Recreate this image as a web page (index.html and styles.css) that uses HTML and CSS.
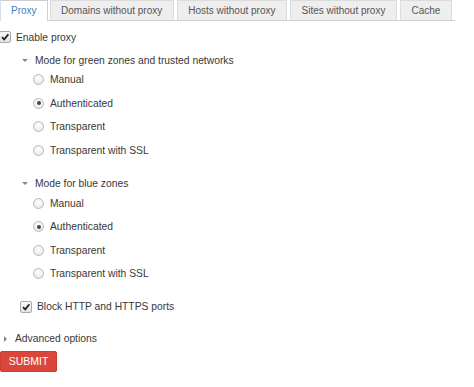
FILE: index.html
```html
<!DOCTYPE html>
<html>
<head>
<meta charset="utf-8">
<link rel="stylesheet" href="styles.css">
</head>
<body>
<div class="tabs">
  <div class="tab active">Proxy</div>
  <div class="tab">Domains without proxy</div>
  <div class="tab">Hosts without proxy</div>
  <div class="tab">Sites without proxy</div>
  <div class="tab">Cache</div>
</div>
<div class="form">
  <div class="row top-row"><span class="check"><svg viewBox="0 0 10 10" width="10" height="10"><path d="M2 5.2 L4.2 7.4 L8.4 2.2" fill="none" stroke="#222" stroke-width="1.8"/></svg></span><span class="label l-enable">Enable proxy</span></div>

  <div class="group">
    <div class="row head"><span class="tri-down"></span><span class="label">Mode for green zones and trusted networks</span></div>
    <div class="row radio-row first"><span class="radio"></span><span class="label">Manual</span></div>
    <div class="row radio-row"><span class="radio on"></span><span class="label">Authenticated</span></div>
    <div class="row radio-row"><span class="radio"></span><span class="label">Transparent</span></div>
    <div class="row radio-row"><span class="radio"></span><span class="label">Transparent with SSL</span></div>
  </div>

  <div class="group">
    <div class="row head"><span class="tri-down"></span><span class="label">Mode for blue zones</span></div>
    <div class="row radio-row first"><span class="radio"></span><span class="label">Manual</span></div>
    <div class="row radio-row"><span class="radio on"></span><span class="label">Authenticated</span></div>
    <div class="row radio-row"><span class="radio"></span><span class="label">Transparent</span></div>
    <div class="row radio-row"><span class="radio"></span><span class="label">Transparent with SSL</span></div>
  </div>

  <div class="row block-row"><span class="check"><svg viewBox="0 0 10 10" width="10" height="10"><path d="M2 5.2 L4.2 7.4 L8.4 2.2" fill="none" stroke="#222" stroke-width="1.8"/></svg></span><span class="label l-block">Block HTTP and HTTPS ports</span></div>

  <div class="row adv-row"><span class="tri-right"></span><span class="label l-adv">Advanced options</span></div>

  <button class="submit">SUBMIT</button>
</div>
</body>
</html>
```
FILE: styles.css
```css
html, body {
  margin: 0;
  padding: 0;
  background: #fff;
}
body {
  font-family: Arial, "Liberation Sans", sans-serif;
  font-size: 10.3px;
  color: #383838;
}
.tabs {
  display: flex;
  width: 455px;
  height: 20px;
  border-bottom: 1px solid #cfcfcf;
  box-sizing: content-box;
}
.tab {
  flex: none;
  white-space: nowrap;
  height: 20px;
  line-height: 19px;
  font-size: 10px;
  padding: 0 10.5px;
  margin-right: 3px;
  background: #eeeeee;
  color: #555;
  border: 1px solid #dcdcdc;
  border-bottom: none;
  box-sizing: border-box;
}
.tab.active {
  background: #fff;
  color: #3d7fbf;
  height: 21px;
  border-color: #cfcfcf;
  border-left-color: #cfe0ef;
  padding: 0 10px;
  margin-right: 2px;
}
.form {
  padding: 0;
}
.row {
  display: flex;
  align-items: center;
  height: 16px;
}
.top-row {
  margin-top: 8px;
}
.check {
  width: 10px;
  height: 10px;
  border: 1px solid #aaa;
  border-radius: 2px;
  background: linear-gradient(#fafafa, #e2e2e2);
  display: flex;
  align-items: center;
  justify-content: center;
  box-sizing: content-box;
  flex: none;
}
.check svg { display: block; }
.label { white-space: nowrap; }
.l-enable { margin-left: 5px; }
.top-row .check { margin-left: -1px; }
.group { margin-top: 7px; }
.group + .group { margin-top: 17.5px; }
.head { padding-left: 22px; }
.tri-down {
  width: 0; height: 0;
  border-left: 3px solid transparent;
  border-right: 3px solid transparent;
  border-top: 3px solid #888;
  margin-right: 7px;
}
.tri-right {
  width: 0; height: 0;
  border-top: 3px solid transparent;
  border-bottom: 3px solid transparent;
  border-left: 3px solid #888;
  margin-left: 4px;
  margin-right: 8px;
}
.radio-row { padding-left: 33px; margin-top: 7.5px; }
.radio-row.first { margin-top: 3.5px; }
.radio {
  width: 9px;
  height: 9px;
  border-radius: 50%;
  border: 1px solid #b8b8b8;
  background: radial-gradient(circle at 50% 35%, #ffffff, #e4e4e4);
  margin-right: 6px;
  flex: none;
  display: flex;
  align-items: center;
  justify-content: center;
}
.radio.on::after {
  content: "";
  width: 4px;
  height: 4px;
  border-radius: 50%;
  background: #444;
}
.block-row { padding-left: 20px; margin-top: 17px; }
.l-block { margin-left: 5px; }
.adv-row { margin-top: 16px; }
.submit {
  display: block;
  margin-top: 4px;
  height: 21px;
  width: 57px;
  padding: 0;
  border: 1px solid #c8402f;
  border-radius: 2px;
  background: #da473a;
  color: #fff;
  font-family: Arial, "Liberation Sans", sans-serif;
  font-size: 10.5px;
  line-height: 19px;
  box-shadow: 0 1px 2px rgba(0,0,0,0.2);
}
```
